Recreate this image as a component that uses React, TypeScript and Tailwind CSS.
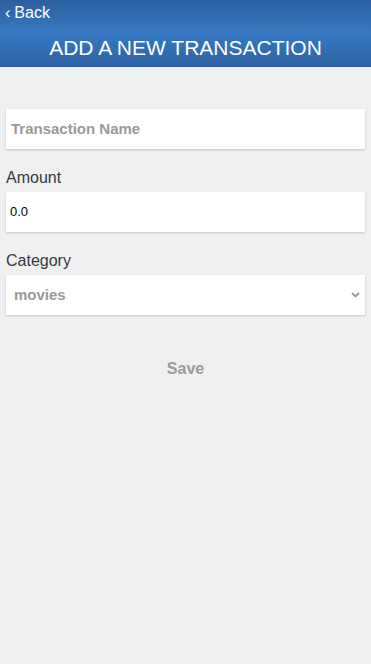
import React from "react";

export default function App() {
  return (
    <div
      className="w-[371px] h-[664px] bg-[#f0f0f0] flex flex-col"
      style={{ fontFamily: '"Liberation Sans", Arial, sans-serif' }}
    >
      <header className="h-[67px] bg-[linear-gradient(to_bottom,#2c60a0,#3679c2_50%,#2d62a2)] flex flex-col text-white">
        <div className="h-[25px] flex items-center pl-[5px] text-[16px] leading-none">
          <span className="mr-[4px]">‹</span>
          <span>Back</span>
        </div>
        <div className="flex-1 flex items-center justify-center text-[21px] leading-none pt-[2px]">
          ADD A NEW TRANSACTION
        </div>
      </header>
      <div className="flex flex-col px-[6px] pt-[42px]">
        <div className="h-[40px] bg-white shadow-[0_1px_2px_rgba(0,0,0,0.18)] flex items-center pl-[5px] text-[15px] font-bold text-[#9a9a9a]">
          Transaction Name
        </div>
        <div className="mt-[21px] text-[16px] text-[#333b45] leading-none h-[16px]">Amount</div>
        <div className="mt-[6px] h-[40px] bg-white shadow-[0_1px_2px_rgba(0,0,0,0.18)] flex items-center pl-[4px] text-[13px] text-black">
          0.0
        </div>
        <div className="mt-[21px] text-[16px] text-[#333b45] leading-none h-[16px]">Category</div>
        <div className="mt-[6px] h-[40px] bg-white shadow-[0_1px_2px_rgba(0,0,0,0.18)] flex items-center justify-between pl-[8px] pr-[5px] text-[15px] font-bold text-[#9a9a9a]">
          <span>movies</span>
          <svg width="9" height="6" viewBox="0 0 9 6" fill="none">
            <path d="M1 1 L4.5 4.5 L8 1" stroke="#9a9a9a" strokeWidth="1.8" />
          </svg>
        </div>
        <div className="mt-[42px] text-center text-[16px] font-bold text-[#9a9a9a]">Save</div>
      </div>
    </div>
  );
}
